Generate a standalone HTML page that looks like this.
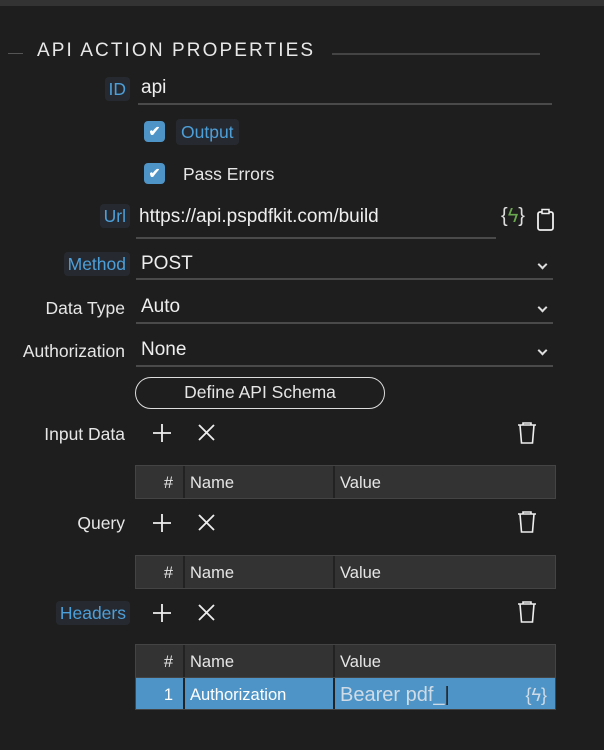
<!DOCTYPE html>
<html><head><meta charset="utf-8"><style>
*{margin:0;padding:0;box-sizing:border-box}
body{width:604px;height:750px;background:#1e1e1e;font-family:"Liberation Sans",sans-serif;color:#e6e6e6;position:relative;overflow:hidden}
.a{position:absolute}
.lbl{position:absolute;font-size:17.5px;line-height:26px;text-align:right;right:479px}
.chip{background:#262a30;color:#4d9fd9;border-radius:4px;padding:2px 4px;margin-right:-5px}
.val{position:absolute;font-size:19px;line-height:26px;color:#eee}
.ul{position:absolute;height:2px;background:#4a4a4a}
.chev{position:absolute;left:539px;width:7px;height:7px;border-right:2px solid #ddd;border-bottom:2px solid #ddd;transform:rotate(45deg)}
.cb{position:absolute;left:144px;width:21px;height:21px;background:#4f94c6;border-radius:4px;color:#fff;font-size:14px;text-align:center;line-height:21px;font-weight:bold}
.tbl{position:absolute;left:135px;width:421px;border:1px solid #444;background:#333;font-size:16.5px}
.row{display:flex;height:32px;line-height:34px}
.row div{border-right:2px solid #222}
.c1{width:49px;text-align:right;padding-right:10px}
.c2{width:150px;padding-left:5px}
.c3{flex:1;padding-left:5px;border-right:none!important}
</style></head><body>
<div class="a" style="left:0;top:0;width:604px;height:6px;background:#333"></div>
<div class="a" style="left:8px;top:53px;width:15px;height:1px;background:#555"></div>
<div class="a" style="left:332px;top:53px;width:208px;height:2px;background:#444"></div>
<div class="a" style="left:37px;top:40px;font-size:19px;letter-spacing:2.1px;color:#e8e8e8">API ACTION PROPERTIES</div>

<div class="lbl" style="top:76px"><span class="chip">ID</span></div>
<div class="val" style="left:141px;top:75px">api</div>
<div class="ul" style="left:138px;top:103px;width:414px"></div>

<div class="cb" style="top:121px">✔</div>
<div class="a chip" style="left:176px;top:119px;font-size:17.5px;line-height:26px;padding:0 5px">Output</div>
<div class="cb" style="top:163px">✔</div>
<div class="a" style="left:183px;top:161px;font-size:17.5px;line-height:26px">Pass Errors</div>

<div class="lbl" style="top:203px"><span class="chip">Url</span></div>
<div class="val" style="left:139px;top:204px">https://api.pspdfkit.com/build</div>
<div class="ul" style="left:136px;top:237px;width:360px"></div>
<div class="a" style="left:501px;top:205px;font-size:20px;color:#ddd">{<span style="color:#6aa84f">ϟ</span>}</div>
<svg class="a" style="left:536px;top:208px" width="20" height="24" viewBox="0 0 20 24"><rect x="2" y="4" width="15" height="18" rx="2" fill="none" stroke="#eee" stroke-width="1.8"/><rect x="6" y="1.5" width="7" height="4" fill="#1e1e1e" stroke="#eee" stroke-width="1.5"/></svg>

<div class="lbl" style="top:251px"><span class="chip">Method</span></div>
<div class="val" style="left:141px;top:251px">POST</div>
<div class="chev" style="top:261px"></div>
<div class="ul" style="left:136px;top:278px;width:417px"></div>

<div class="lbl" style="top:295px">Data Type</div>
<div class="val" style="left:141px;top:294px">Auto</div>
<div class="chev" style="top:304px"></div>
<div class="ul" style="left:136px;top:322px;width:417px"></div>

<div class="lbl" style="top:338px">Authorization</div>
<div class="val" style="left:141px;top:337px">None</div>
<div class="chev" style="top:347px"></div>
<div class="ul" style="left:136px;top:365px;width:417px"></div>

<div class="a" style="left:135px;top:377px;width:250px;height:32px;border:1.5px solid #ddd;border-radius:16px;text-align:center;line-height:29px;font-size:17.5px">Define API Schema</div>

<div class="lbl" style="top:421px">Input Data</div>
<svg class="a" style="left:151px;top:422px" width="22" height="22" viewBox="0 0 22 22"><path d="M11 2V20M2 11H20" stroke="#eee" stroke-width="1.8"/></svg>
<svg class="a" style="left:197px;top:423px" width="20" height="20" viewBox="0 0 20 20"><path d="M2 2L17 17M17 2L2 17" stroke="#eee" stroke-width="1.8"/></svg>
<svg class="a" style="left:516px;top:421px" width="22" height="24" viewBox="0 0 22 24"><path d="M2 4H20M7 4V2H15V4M4 4L5.5 22H16.5L18 4" fill="none" stroke="#eee" stroke-width="1.6"/></svg>
<div class="tbl" style="top:465px"><div class="row"><div class="c1">#</div><div class="c2">Name</div><div class="c3">Value</div></div></div>

<div class="lbl" style="top:510px">Query</div>
<svg class="a" style="left:151px;top:512px" width="22" height="22" viewBox="0 0 22 22"><path d="M11 2V20M2 11H20" stroke="#eee" stroke-width="1.8"/></svg>
<svg class="a" style="left:197px;top:513px" width="20" height="20" viewBox="0 0 20 20"><path d="M2 2L17 17M17 2L2 17" stroke="#eee" stroke-width="1.8"/></svg>
<svg class="a" style="left:516px;top:510px" width="22" height="24" viewBox="0 0 22 24"><path d="M2 4H20M7 4V2H15V4M4 4L5.5 22H16.5L18 4" fill="none" stroke="#eee" stroke-width="1.6"/></svg>
<div class="tbl" style="top:555px"><div class="row"><div class="c1">#</div><div class="c2">Name</div><div class="c3">Value</div></div></div>

<div class="lbl" style="top:600px"><span class="chip">Headers</span></div>
<svg class="a" style="left:151px;top:602px" width="22" height="22" viewBox="0 0 22 22"><path d="M11 2V20M2 11H20" stroke="#eee" stroke-width="1.8"/></svg>
<svg class="a" style="left:197px;top:603px" width="20" height="20" viewBox="0 0 20 20"><path d="M2 2L17 17M17 2L2 17" stroke="#eee" stroke-width="1.8"/></svg>
<svg class="a" style="left:516px;top:600px" width="22" height="24" viewBox="0 0 22 24"><path d="M2 4H20M7 4V2H15V4M4 4L5.5 22H16.5L18 4" fill="none" stroke="#eee" stroke-width="1.6"/></svg>
<div class="tbl" style="top:644px"><div class="row"><div class="c1">#</div><div class="c2">Name</div><div class="c3">Value</div></div>
<div class="row" style="background:#4f94c6;color:#fff;border-top:1px solid #444"><div class="c1">1</div><div class="c2">Authorization</div><div class="c3" style="font-size:20px;color:#cfdbe6;position:relative">Bearer pdf_<span style="color:#222">|</span><span style="position:absolute;right:8px;font-size:18px;color:#cfdbe6">{ϟ}</span></div></div></div>
</body></html>
